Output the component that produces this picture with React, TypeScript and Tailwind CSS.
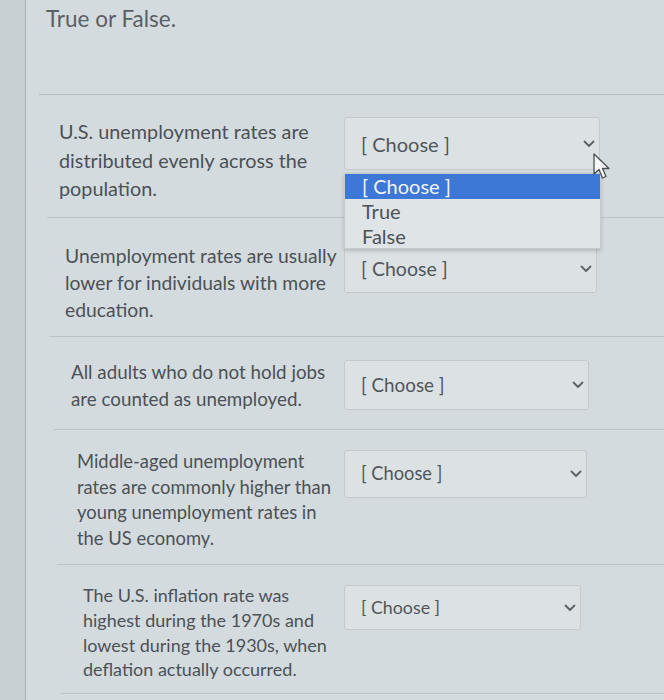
import type { ReactNode } from "react";

type Row = {
  lines: string[];
  wrap: string; // separator start + row height
  pad: string; // text left inset
  textBox: string; // text width, top offset, size, leading
  selectBox: string; // select size + top offset
  chooseSize: string;
};

const rows: Row[] = [
  {
    lines: ["U.S. unemployment rates are", "distributed evenly across the", "population."],
    wrap: "ml-[21px] h-[123px]",
    pad: "pl-[12px]",
    textBox: "w-[285px] mt-[22px] text-[19.8px] leading-[28.5px]",
    selectBox: "w-[256px] h-[53px] mt-[22px]",
    chooseSize: "text-[20px]",
  },
  {
    lines: ["Unemployment rates are usually", "lower for individuals with more", "education."],
    wrap: "ml-[23px] h-[119px]",
    pad: "pl-[16px]",
    textBox: "w-[279px] mt-[24px] text-[19.3px] leading-[27px]",
    selectBox: "w-[253px] h-[48px] mt-[27px]",
    chooseSize: "text-[19.5px]",
  },
  {
    lines: ["All adults who do not hold jobs", "are counted as unemployed."],
    wrap: "ml-[28px] h-[93px]",
    pad: "pl-[17px]",
    textBox: "w-[273px] mt-[21px] text-[18.8px] leading-[27px]",
    selectBox: "w-[245px] h-[50px] mt-[23px]",
    chooseSize: "text-[18.8px]",
  },
  {
    lines: [
      "Middle-aged unemployment",
      "rates are commonly higher than",
      "young unemployment rates in",
      "the US economy.",
    ],
    wrap: "ml-[31px] h-[135px]",
    pad: "pl-[20px]",
    textBox: "w-[267px] mt-[19px] text-[18.4px] leading-[25.5px]",
    selectBox: "w-[243px] h-[48px] mt-[20px]",
    chooseSize: "text-[18.3px]",
  },
  {
    lines: [
      "The U.S. inflation rate was",
      "highest during the 1970s and",
      "lowest during the 1930s, when",
      "deflation actually occurred.",
    ],
    wrap: "ml-[35px] h-[129px]",
    pad: "pl-[22px]",
    textBox: "w-[261px] mt-[18px] text-[18px] leading-[24.8px]",
    selectBox: "w-[237px] h-[45px] mt-[20px]",
    chooseSize: "text-[17.8px]",
  },
];

function Chevron() {
  return (
    <svg width="12" height="8" viewBox="0 0 12 8" fill="none" stroke="#5b6166" strokeWidth="1.8" strokeLinecap="round" strokeLinejoin="round">
      <polyline points="1.5,1.5 6,6 10.5,1.5" />
    </svg>
  );
}

function Cursor() {
  return (
    <svg width="20" height="28" viewBox="0 0 20 28">
      <path
        d="M1 1 L1 21 L6 16.5 L9.5 25 L13 23.5 L9.5 15.5 L16 15.5 Z"
        fill="#f4f6f7"
        stroke="#4a4f54"
        strokeWidth="1.3"
        strokeLinejoin="round"
      />
    </svg>
  );
}

function Select({ box, size, children }: { box: string; size: string; children?: ReactNode }) {
  return (
    <div
      className={`relative shrink-0 ${box} flex items-center justify-between pl-[16px] pr-[4px] rounded-[3px] border border-[#c3c9cc] bg-[#dce2e4]`}
    >
      <span className={`${size} text-[#50565b]`}>[ Choose ]</span>
      <Chevron />
      {children}
    </div>
  );
}

function OpenList() {
  return (
    <div className="absolute left-[-1px] top-[55px] w-[257px] h-[76px] z-10 bg-[#dfe4e6] border border-[#c6cbce] shadow-[0_2px_4px_rgba(0,0,0,0.18)] flex flex-col text-[20px] leading-[25px]">
      <div className="h-[25px] bg-[#3d78d6] text-[#f2f5fa] pl-[17px]">[ Choose ]</div>
      <div className="h-[25px] text-[#4c5257] pl-[17px]">True</div>
      <div className="h-[25px] text-[#4c5257] pl-[17px]">False</div>
    </div>
  );
}

export default function App() {
  return (
    <div
      className="w-[664px] h-[700px] overflow-hidden flex bg-[#d4dbde]"
      style={{ fontFamily: "Lato, 'Open Sans', sans-serif" }}
    >
      {/* left gutter of the page */}
      <div className="w-[26px] shrink-0 bg-[#c9d0d3] border-r border-[#a9b0b4]" />

      <div className="flex-1 flex flex-col">
        {/* header */}
        <div className="ml-[13px] h-[95px] border-b border-[#b4bbbf] pl-[7px] pt-[5px]">
          <h1 className="text-[22.5px] leading-[28px] text-[#5a5f64]">True or False.</h1>
        </div>

        {rows.map((row, i) => (
          <div key={i} className={`${row.wrap} shrink-0 border-b border-[#bcc3c6] flex items-start ${row.pad}`}>
            <div className={`${row.textBox} shrink-0 text-[#4b5156] whitespace-nowrap`}>
              {row.lines.map((l) => (
                <div key={l}>{l}</div>
              ))}
            </div>
            <Select box={row.selectBox} size={row.chooseSize}>
              {i === 0 && (
                <>
                  <OpenList />
                  <div className="absolute left-[248px] top-[35px] z-20">
                    <Cursor />
                  </div>
                </>
              )}
            </Select>
          </div>
        ))}
      </div>
    </div>
  );
}
